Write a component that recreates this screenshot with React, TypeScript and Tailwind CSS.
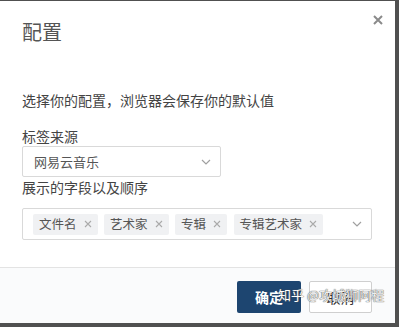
import React from 'react';

const font = { fontFamily: '"Noto Sans CJK SC", "Noto Sans", sans-serif' };

const fields = ['文件名', '艺术家', '专辑', '专辑艺术家'];

function Chevron() {
  return (
    <svg width="10" height="6" viewBox="0 0 10 6" fill="none" stroke="#a0a0a0" strokeWidth="1.2">
      <path d="M1 1l4 4 4-4" />
    </svg>);

}

function Tag({ label }: { label: string }) {
  return (
    <span className="flex items-center h-[21px] pl-[6px] pr-[6px] gap-[7px] bg-[#f0f1f3] rounded-[2px] text-[12.5px] text-[#555]">
      {label}
      <svg width="8" height="8" viewBox="0 0 8 8" stroke="#aaa" strokeWidth="1.1">
        <path d="M1 1l6 6M7 1l-6 6" />
      </svg>
    </span>);

}

export default function App() {
  return (
    <div className="w-[399px] h-[327px] bg-[#505050] flex flex-col pt-px pr-[4px] pb-[4px]" style={font}>
      <div className="relative flex-1 bg-white flex flex-col">
        <button className="absolute right-[11px] top-[13px] p-px">
          <svg width="10" height="10" viewBox="0 0 10 10" stroke="#8a8a8a" strokeWidth="2">
            <path d="M1 1l8 8M9 1l-8 8" />
          </svg>
        </button>

        <div className="flex-1 pl-[22px]">
          <h1 className="mt-[17px] text-[20px] leading-[28px] text-[#555]">配置</h1>

          <p className="mt-[44px] text-[14px] leading-[20px] text-[#444]">
            选择你的配置，浏览器会保存你的默认值
          </p>

          <div className="mt-[16px] text-[14px] leading-[20px] text-[#444]">标签来源</div>
          <div className="w-[199px] h-[31px] border border-[#d9d9d9] rounded-[2px] flex items-center justify-between pl-[11px] pr-[9px]">
            <span className="text-[13px] text-[#555]">网易云音乐</span>
            <Chevron />
          </div>

          <div className="text-[14px] leading-[20px] text-[#444]">展示的字段以及顺序</div>
          <div className="mt-[11px] w-[350px] h-[32px] border border-[#d9d9d9] rounded-[2px] flex items-center justify-between pl-[10px] pr-[9px]">
            <div className="flex gap-[6.5px]">
              {fields.map((f) =>
              <Tag key={f} label={f} />
              )}
            </div>
            <Chevron />
          </div>
        </div>

        <div className="h-[56px] border-t border-[#e3e3e3] bg-[#fafbfc] flex justify-end items-start pt-[13px] pr-[23px] gap-[8px]">
          <button className="w-[64px] h-[32px] bg-[#1d4570] rounded-[2px] text-white text-[14px] font-bold">确定</button>
          <button className="w-[63px] h-[32px] bg-white border border-[#cfcfcf] rounded-[2px] text-[#333] text-[14px]">取消</button>
        </div>

        <span className="absolute left-[278px] top-[285px] text-[13px] leading-[18px] text-white whitespace-nowrap [text-shadow:0_0_1px_#555,0_0_1px_#555]">
          知乎 <span className="text-[#eee]">@攻城狮阿程</span>
        </span>
      </div>
    </div>);

}
